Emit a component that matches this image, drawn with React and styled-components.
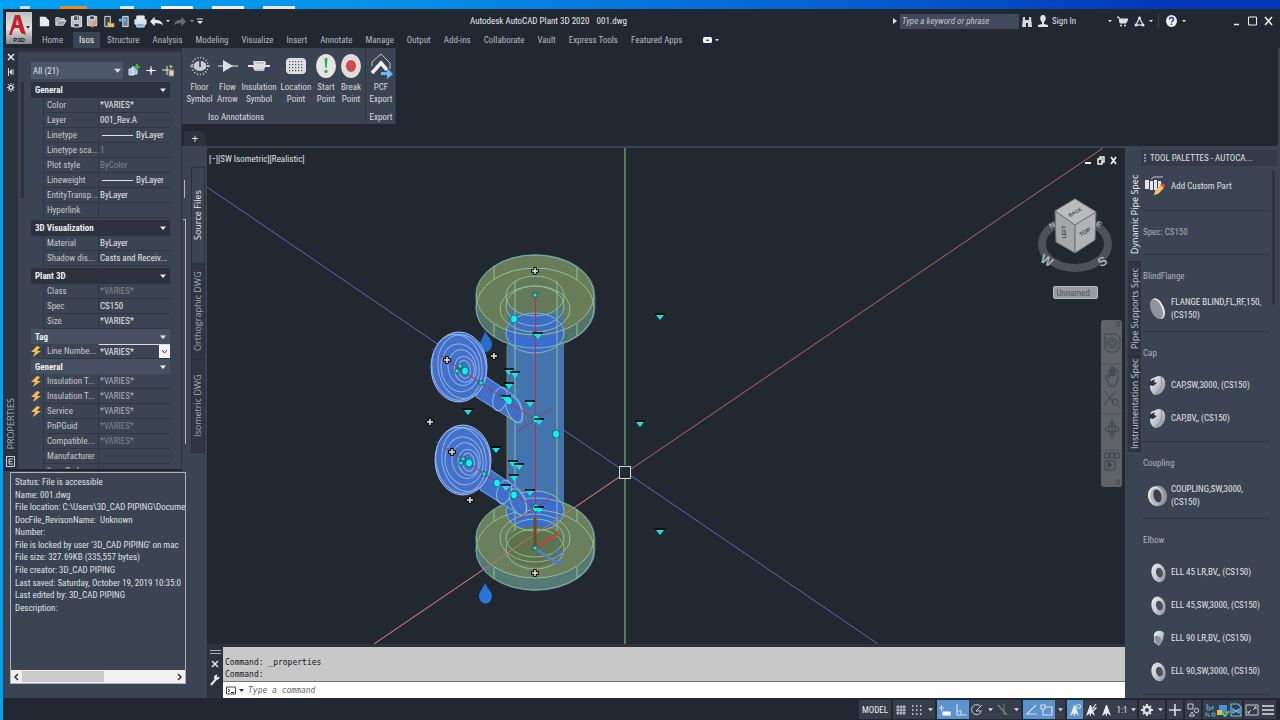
import React, { useState } from 'react';
import styled, { createGlobalStyle } from 'styled-components';

const narrow = '"Roboto Condensed", Roboto, sans-serif';
const wide = '"Open Sans", "Noto Sans", sans-serif';

const GlobalStyle = createGlobalStyle`
    * { box-sizing: border-box; }
    body { margin: 0; overflow: hidden; font-family: ${narrow}; font-size: 9px; color: #dde1e5; }
    button, input, select { font: inherit; color: inherit; margin: 0; padding: 0; border: 0; background: none; border-radius: 0; }
    svg { display: block; flex: none; }
    ul, h1, h2, h3, p { margin: 0; padding: 0; list-style: none; font-weight: normal; font-size: inherit; }
`;

const ribbonTabs = ['Home', 'Isos', 'Structure', 'Analysis', 'Modeling', 'Visualize', 'Insert', 'Annotate', 'Manage', 'Output', 'Add-ins', 'Collaborate', 'Vault', 'Express Tools', 'Featured Apps'];

const isoButtons = [
    { a: 'Floor', b: 'Symbol', icon: 'floor' },
    { a: 'Flow', b: 'Arrow', icon: 'flow' },
    { a: 'Insulation', b: 'Symbol', icon: 'insul' },
    { a: 'Location', b: 'Point', icon: 'location' },
    { a: 'Start', b: 'Point', icon: 'start' },
    { a: 'Break', b: 'Point', icon: 'stop' },
];

const groups = [
    { title: 'General', rows: [
        ['Color', '*VARIES*'], ['Layer', '001_Rev.A'], ['Linetype', 'ByLayer', 'line'], ['Linetype sca...', '1', 'dim'],
        ['Plot style', 'ByColor', 'dim'], ['Lineweight', 'ByLayer', 'line'], ['EntityTransp...', 'ByLayer'], ['Hyperlink', ''],
    ] },
    { title: '3D Visualization', gap: true, rows: [['Material', 'ByLayer'], ['Shadow dis...', 'Casts and Receiv...']] },
    { title: 'Plant 3D', gap: true, rows: [['Class', '*VARIES*', 'dim'], ['Spec', 'CS150'], ['Size', '*VARIES*']] },
    { title: 'Tag', sub: true, rows: [['Line Numbe...', '*VARIES*', 'edit']] },
    { title: 'General', sub: true, rows: [
        ['Insulation T...', '*VARIES*', 'bolt'], ['Insulation T...', '*VARIES*', 'bolt'], ['Service', '*VARIES*', 'bolt'],
        ['PnPGuid', '*VARIES*', 'dim'], ['Compatible...', '*VARIES*', 'dim'], ['Manufacturer', ''], ['Item Code', ''],
    ] },
];

const details = [
    'Status: File is accessible', 'Name: 001.dwg', 'File location: C:\\Users\\3D_CAD PIPING\\Docume',
    'DocFile_RevisonName:  Unknown', 'Number:', "File is locked by user '3D_CAD PIPING' on mac", 'File size: 327.69KB (335,557 bytes)',
    'File creator: 3D_CAD PIPING', 'Last saved: Saturday, October 19, 2019 10:35:0', 'Last edited by: 3D_CAD PIPING', 'Description:',
];

const parts = [
    { title: 'BlindFlange', items: [['FLANGE BLIND,FL,RF,150, (CS150)', 'disc']] },
    { title: 'Cap', items: [['CAP,SW,3000, (CS150)', 'cap'], ['CAP,BV,, (CS150)', 'cap']] },
    { title: 'Coupling', items: [['COUPLING,SW,3000, (CS150)', 'coupling']] },
    { title: 'Elbow', items: [['ELL 45 LR,BV,, (CS150)', 'ell'], ['ELL 45,SW,3000, (CS150)', 'ell'], ['ELL 90 LR,BV,, (CS150)', 'ell90'], ['ELL 90,SW,3000, (CS150)', 'ell']] },
];

const QuickIcon = ({ name }) => (
    <svg width="13" height="13" viewBox="0 0 14 14" fill="none" stroke="#e4e7ea">
        {name == 'new' && <path d="M2 2h6l4 4v6H2z" fill="#e8eaec" stroke="none" />}
        {name == 'open' && <path d="M2 11V3h4l1 1h4v2M2 11l3-5h8l-3 5z" fill="#c9ccd0" fillOpacity=".7" />}
        {name == 'save' && <><path d="M1.500 1.500h11v11h-11z" fill="#b7bbc0" /><path d="M4 1h6v5H4zM4 9h6v4H4z" fill="#3d434c" /><path d="M8 2v3" /></>}
        {name == 'saveas' && <><path d="M1.500 1.500h10v10h-10z" fill="#b7bbc0" /><path d="M4 1h5v4H4z" fill="#3d434c" /><path d="M6 13l6-7" stroke="#e89b4f" strokeWidth="2.500" /></>}
        {name == 'web' && <><path d="M3 1.500h6v11H3z" fill="#3d434c" /><path d="M6 8h2l1 1h4v4H6z" fill="#e8c26a" stroke="#b08838" strokeWidth=".6" /></>}
        {name == 'tomobile' && <><path d="M5 1.500h6v11H5z" fill="#7d838c" /><path d="M1 4h4V2l4 3.500L5 9V7H1z" fill="#59b4ee" stroke="none" /></>}
        {name == 'print' && <><path d="M3 1h8v4H3z" fill="#e8eaec" /><path d="M1 5h12v5H1z" fill="#dfe2e5" /><path d="M3 9h8v4H3z" fill="#69b7e6" /></>}
        {name == 'undo' && <path d="M0 7l5-5v3c4 0 8 1 9 6-3-2-5-2-9-2v3z" fill="#e8eaec" stroke="none" />}
        {name == 'redo' && <path d="M13 7L8 2v3c-4 0-7 1-8 6 3-2 5-2 8-2v3z" fill="#666c76" stroke="none" />}
    </svg>
);

const Caret = ({ size = 5, color = '#d7dade' }) => (
    <svg width={size} height={size} viewBox="0 0 6 6"><path d="M0 1.500h6L3 5z" fill={color} /></svg>
);

const RibbonIcon = ({ name }) => (
    <svg width="26" height="26" viewBox="0 0 26 26">
        {name == 'floor' && <><ellipse cx="13" cy="13" rx="8" ry="8.500" fill="none" stroke="#e3e5e8" strokeWidth="1.500" strokeDasharray="1 2" /><ellipse cx="13" cy="13" rx="6.500" ry="5" fill="#c8cbcf" /><path d="M3 13h3M20 13h3" stroke="#e3e5e8" /><path d="M13 8v6" stroke="#30363f" strokeWidth="1.500" /></>}
        {name == 'flow' && <><path d="M3 13h20" stroke="#e3e5e8" strokeWidth="1" /><path d="M8 7l10 6-10 6z" fill="#dcdfe2" /></>}
        {name == 'insul' && <><path d="M2 13h22" stroke="#e3e5e8" strokeWidth="2" /><path d="M7 8h12l1 2-2 8H9l-2-3 1-2z" fill="#dcdfe2" /><path d="M8 17h10M9 10h9" stroke="#8a8f96" strokeWidth=".7" /></>}
        {name == 'location' && <><rect x="3" y="5" width="20" height="16" rx="4" fill="#dedfe1" /><g fill="#4a4e55">{[9, 12, 15, 18].map(y => [7, 10, 13, 16, 19].map(x => <rect key={x + '-' + y} x={x - 1} y={y - 1} width="1.200" height="1.200" />))}</g></>}
        {name == 'start' && <><ellipse cx="13" cy="13" rx="10" ry="12" fill="#e4e4e3" /><path d="M11.500 5h3l-.8 10h-1.400z" fill="#2fae57" /><circle cx="13" cy="18.500" r="1.700" fill="#2fae57" /></>}
        {name == 'stop' && <><ellipse cx="13" cy="13" rx="10" ry="12" fill="#dedddc" /><ellipse cx="13" cy="13" rx="5" ry="6" fill="#cf4a4a" /></>}
        {name == 'pcf' && <><path d="M4 13v-4l9-8 9 9v6" fill="none" stroke="#c5c9cf" /><path d="M4 20l9-10 6 7" fill="none" stroke="#f1f2f4" strokeWidth="3.500" /><path d="M13 19h6v-4l6 6-6 5v-4h-6z" fill="#6bb7f2" /></>}
    </svg>
);

const PartIcon = ({ name }) => (
    <svg width="22" height="24" viewBox="0 0 22 24">
        <defs><linearGradient id="metal" x1="0" y1="0" x2="1" y2="1"><stop offset="0" stopColor="#f2f3f5" /><stop offset=".5" stopColor="#c3c7cd" /><stop offset="1" stopColor="#80868f" /></linearGradient></defs>
        {name == 'disc' && <g transform="rotate(-24 11 12)"><ellipse cx="12" cy="12" rx="6" ry="11" fill="#e6e8eb" /><ellipse cx="10.500" cy="12" rx="5.500" ry="10.500" fill="#8f959d" /></g>}
        {name == 'cap' && <><path d="M5 5l7-3c6 0 8 5 7 10s-5 9-10 9c-4-2-5-6-5-9z" fill="url(#metal)" /><path d="M9 20c5-2 8-9 6-17" stroke="#8b9199" fill="none" /><path d="M3 8l6-3-1 3 3 1-4 3-4-1z" fill="#2d333d" /></>}
        {name == 'coupling' && <g transform="rotate(-14 11 12)"><ellipse cx="13" cy="12" rx="8" ry="10" fill="#8d939b" /><ellipse cx="10" cy="12" rx="8" ry="10" fill="url(#metal)" /><ellipse cx="10" cy="12" rx="5.500" ry="7.500" fill="#aeb4bc" /><ellipse cx="11.500" cy="12" rx="4" ry="6.500" fill="#38404c" /></g>}
        {name == 'ell' && <g transform="rotate(-14 12 12)"><ellipse cx="12.500" cy="12" rx="7" ry="9.500" fill="url(#metal)" /><ellipse cx="13" cy="11" rx="4.500" ry="6" fill="#d7dade" /><ellipse cx="13.500" cy="12" rx="3.500" ry="5" fill="#4a525e" /></g>}
        {name == 'ell90' && <><path d="M8 7c2-4 7-4 10-1l-1 7-4 6-5-4z" fill="url(#metal)" /><ellipse cx="12" cy="13" rx="3" ry="5" transform="rotate(-30 12 13)" fill="#8a9099" /></>}
    </svg>
);

const StatusIcon = ({ name }) => (
    <svg width="14" height="14" viewBox="0 0 14 14" fill="none" stroke="#dadde1" strokeWidth="1.200">
        {name == 'grid' && <path d="M2 4h10M2 7h10M2 10h10M4 2v10M7 2v10M10 2v10" strokeWidth=".9" />}
        {name == 'snap' && <path d="M2 3h10M2 7h10M2 11h10" strokeDasharray="1.500 2.500" strokeWidth="1.500" />}
        {name == 'dyn' && <><path d="M1 5h5M3.500 2v6" /><path d="M5 9h7v3H5z" fill="#fff" stroke="#fff" /></>}
        {name == 'ortho' && <path d="M3 1v11h10M3 8h4v4" />}
        {name == 'polar' && <path d="M10 3a5 5 0 1 0 1 6M6 8l6-6M6 8h6" strokeWidth=".9" />}
        {name == 'iso' && <><path d="M2 2l9 10" stroke="#57a36a" /><path d="M8 1v11" stroke="#b2575f" /></>}
        {name == 'angle' && <path d="M12 2L3 11h10" />}
        {name == 'osnap' && <><path d="M3 4h9v8H3z" /><path d="M1 2h4v4H1z" fill="#5b93cf" /></>}
        {(name == 'anno' || name == 'auto' || name == 'scale') && <path d="M6 2h1l4 11-3-2.500H7V13H6v-2.500L2 13z" fill="#e8eaed" stroke="none" />}
        {name == 'anno' && <circle cx="10.500" cy="3.500" r="2" />}
        {name == 'auto' && <path d="M12 1L9 5h3L9 8" />}
        {name == 'gear' && <><circle cx="7" cy="7" r="3.200" strokeWidth="2.500" /><path d="M7 1v2M7 11v2M1 7h2M11 7h2M3 3l1 1M10 10l1 1M3 11l1-1M10 4l1-1" strokeWidth="2" /></>}
        {name == 'plus' && <path d="M7 1v12M1 7h12" strokeWidth="1.600" />}
        {name == 'shapes' && <><path d="M2 1h5v5H2zM6 9l2.500 4h-5z" strokeWidth=".9" /><circle cx="10.500" cy="7.500" r="2.200" strokeWidth=".9" /></>}
        {name == 'isohot' && <g stroke="#5eb2ee"><path d="M4 1v6h3V4M4 4h3M7 7l3-4v4M3 9v4M5 10v3h2M9 10h3v3H9z" strokeWidth=".9" /></g>}
        {name == 'plan' && <><path d="M3 2h8v8H3z" fill="#4493d8" stroke="none" /><path d="M1 7h5v5H1z" fill="#e2bb4a" stroke="none" /><path d="M6 10l3 3 4-5" stroke="#6dc25a" strokeWidth="2" /></>}
        {name == 'doc' && <g stroke="#6cb9ee"><path d="M2 1h7l3 3v9H2z" /><path d="M4 6v4l3-2 3 2V6L7 8z" /></g>}
        {name == 'full' && <><path d="M1 2h12v10H1z" strokeWidth=".9" /><path d="M3 10l3-3M3 8v2h2M11 4L8 7M9 4h2v2" strokeWidth=".9" /></>}
        {name == 'menu' && <path d="M1 3h12M1 7h12M1 11h12" strokeWidth="1.700" />}
    </svg>
);

const Bolt = () => <svg width="10" height="11" viewBox="0 0 10 11"><path d="M6 0L0 6h4L2 11l8-6H6l3-4z" fill="#f6bd55" /></svg>;

const triangles = [[660, 316], [640, 423], [660, 531], [468, 411], [538, 335], [509, 371], [515, 374], [509, 385], [530, 403], [506, 398], [539, 421], [496, 449], [513, 463], [519, 466], [514, 477], [506, 487], [530, 492], [539, 509]];
const dots = [[514, 319], [556, 434], [465, 371], [509, 401], [497, 483], [514, 495], [469, 463], [536, 419], [536, 508]];
const squares = [[535, 295], [535, 334], [481, 383], [484, 474], [535, 548], [460, 366], [457, 371], [502, 397], [463, 459], [461, 463]];
const crosses = [[535, 271], [494, 356], [447, 360], [430, 422], [452, 452], [470, 500], [535, 573]];

const Branch = ({ x, y }) => (
    <g>
        <path d={`M${x + 16} ${y + 2}L${x + 57} ${y + 30}q9 10 6 25l-4 1-42-26z`} fill="#3f6fc9" stroke="#79a9ee" />
        <ellipse cx={x + 55} cy={y + 42} rx="7" ry="14" transform={`rotate(-22 ${x + 55} ${y + 42})`} fill="none" stroke="#8cc3a8" />
        <ellipse cx={x + 41} cy={y + 32} rx="7" ry="12" transform={`rotate(14 ${x + 41} ${y + 32})`} fill="none" stroke="#8ab4f2" />
        <ellipse cx={x} cy={y} rx="28" ry="35" fill="#4471c8" stroke="#9fc0f8" />
        <g fill="none" stroke="#8fb0ea" transform={`rotate(-8 ${x} ${y})`}>
            <ellipse cx={x - 2} cy={y} rx="25" ry="33" />
            <ellipse cx={x + 3} cy={y} rx="24" ry="32" />
            <ellipse cx={x + 1} cy={y + 1} rx="19" ry="24" />
            <ellipse cx={x + 3} cy={y + 1} rx="14" ry="18" />
            <ellipse cx={x + 5} cy={y + 3} rx="10" ry="13" />
            <ellipse cx={x + 5} cy={y + 3} rx="6" ry="9" />
        </g>
    </g>
);

const Model = () => (
    <Scene viewBox="207 148 918 496" preserveAspectRatio="xMidYMid slice" role="img" aria-label="Pipe model">
        <path d="M374 644L1103 148" stroke="#b8656f" />
        <path d="M207 187L878 644" stroke="#6a65b5" />
        <path d="M480 343c1-4 4-7 5-12 2 5 7 8 7 13s-3 8-7 8" fill="#2a6dc9" />
        <path d="M476 295v13a59 40 0 0 0 119 0v-13z" fill="#537569" />
        <ellipse cx="535" cy="295" rx="59" ry="40" fill="#697e58" />
        <path d="M476 538v12a59 40 0 0 0 119 0v-12z" fill="#557a74" />
        <ellipse cx="535" cy="538" rx="59" ry="40" fill="#6a7f5c" />
        <path d="M507 322h57v190a29 20 0 0 1-57 0z" fill="#4374ae" />
        <ellipse cx="535" cy="333" rx="29" ry="20" fill="#3a6dd2" />
        <ellipse cx="535" cy="511" rx="29" ry="19" fill="#3a6dd2" />
        <path d="M507 300v22a29 20 0 0 0 57 0v-22z" fill="#4677a0" opacity=".7" />
        <ellipse cx="535" cy="296" rx="29" ry="20" fill="#64785a" />
        <ellipse cx="535" cy="323" rx="27" ry="11" fill="#3a6dd2" opacity=".8" />
        <ellipse cx="535" cy="546" rx="30" ry="20" fill="#5e724c" />
        <g fill="none" stroke="#94bd96">
            <ellipse cx="535" cy="295" rx="59" ry="40" />
            <ellipse cx="535" cy="308" rx="59" ry="40" />
            <ellipse cx="535" cy="296" rx="29" ry="20" />
            <ellipse cx="535" cy="309" rx="35" ry="23" />
            <ellipse cx="535" cy="306" rx="29" ry="20" />
            <ellipse cx="535" cy="333" rx="29" ry="20" />
            <path d="M494 267v13M577 267v13M494 324v12M577 324v12M515 281v250M557 281v250" />
            <ellipse cx="535" cy="538" rx="59" ry="40" />
            <ellipse cx="535" cy="550" rx="59" ry="40" />
            <ellipse cx="535" cy="511" rx="29" ry="20" />
            <ellipse cx="535" cy="538" rx="35" ry="24" />
            <ellipse cx="535" cy="538" rx="29" ry="19" />
            <ellipse cx="535" cy="549" rx="29" ry="20" />
            <path d="M494 510v12M577 510v12M494 567v12M577 567v12" />
        </g>
        <path d="M476 295a59 40 0 0 1 119 0v13a59 40 0 0 1-119 0zM476 538a59 40 0 0 1 119 0v12a59 40 0 0 1-119 0z" fill="none" stroke="#5a9bc8" opacity=".6" />
        <path d="M507 346v164" stroke="#76884e" />
        <Branch x={459} y={367} />
        <Branch x={463} y={460} />
        <path d="M432 349l12 8M436 442l12 8" stroke="#5a62c8" />
        <g stroke="#c02c4a" fill="none">
            <path d="M535.500 295v253M441 356l94 64M446 448l89 60M517 432l35-24M517 520l35-23" />
        </g>
        <path d="M374 644L625 473" stroke="#c0707a" />
        <path d="M485 583c2 5 7 9 7 13a6 7 0 0 1-13 0c0-4 4-8 6-13z" fill="#2a75d8" />
        <path d="M535 548v-30" stroke="#6f4b22" strokeWidth="3" />
        <path d="M535 548l23-15" stroke="#b24a4a" strokeWidth="3" />
        <path d="M535 548l23 16" stroke="#5580c8" strokeWidth="3" />
        <path d="M552 552h12l-6 6 6 4h-8M557 542v20" stroke="#3f78d8" fill="none" />
        <path d="M625 148v317M625 479v165" stroke="#4f8158" strokeWidth="2" />
        <rect x="619.500" y="466.500" width="11" height="12" fill="#242a31" stroke="#d4d7da" />
        {dots.map(([x, y]) => <ellipse key={x + '-' + y} cx={x} cy={y} rx="3.500" ry="4" fill="#12f0f4" stroke="#083a44" strokeWidth=".6" />)}
        {squares.map(([x, y]) => <rect key={x + '-' + y} x={x - 2} y={y - 2} width="4" height="4" fill="#1fe0dc" stroke="#053a3a" strokeWidth=".6" />)}
        {triangles.map(([x, y]) => <g key={x + '-' + y}><path d={`M${x - 4} ${y - 1}h8l-4 5z`} fill="#12e6e6" /><path d={`M${x - 5} ${y - 2}h10`} stroke="#000" strokeWidth="1.500" /></g>)}
        {crosses.map(([x, y]) => <g key={x + '-' + y}><path d={`M${x - 4} ${y}h8M${x} ${y - 4}v8`} stroke="#111" strokeWidth="3.500" /><path d={`M${x - 3} ${y}h6M${x} ${y - 3}v6`} stroke="#e8e8e8" strokeWidth="1.500" /></g>)}
    </Scene>
);

const ViewCube = () => (
    <svg width="80" height="84" viewBox="1035 194 80 84">
        <ellipse cx="1075" cy="244" rx="33" ry="24" fill="none" stroke="#4d5159" strokeWidth="8" />
        <g fill="#a9adb2" fontFamily="Liberation Sans" fontWeight="bold" textAnchor="middle">
            <text x="1052" y="228" fontSize="8" transform="rotate(-30 1052 225)">N</text>
            <text x="1099" y="227" fontSize="8" transform="rotate(30 1099 224)">E</text>
            <text x="1047" y="265" fontSize="13" transform="rotate(30 1047 260)">W</text>
            <text x="1102" y="266" fontSize="13" transform="rotate(-30 1102 261)">S</text>
        </g>
        <path d="M1075 199l21 13-21 13-20-14z" fill="#b9bbbc" stroke="#8b8e92" />
        <path d="M1055 211l20 14v28l-19-11z" fill="#a5a8aa" stroke="#6e7277" />
        <path d="M1096 212l-21 13v28l20-13z" fill="#b1b3b5" stroke="#6e7277" />
        <g fill="#45494f" fontFamily="Liberation Sans" fontWeight="bold" fontSize="5" textAnchor="middle">
            <text x="1075" y="214" transform="rotate(-30 1075 212)">BACK</text>
            <text x="1064" y="234" transform="rotate(-90 1064 232)">LEFT</text>
            <text x="1085" y="234" fontSize="6" transform="rotate(-30 1085 232)">TOP</text>
        </g>
    </svg>
);

export default function App() {
    const [tab, setTab] = useState('Isos');
    const [keyword, setKeyword] = useState('');
    const [command, setCommand] = useState('');

    return (
        <Desktop>
            <GlobalStyle />
            <DesktopEdge>
                <Shortcut $left={20} $width={10} $color="#bfe2fa" />
                <Shortcut $left={60} $width={27} $color="#e98a2b" />
                <Shortcut $left={120} $width={14} $color="#d3ecfb" />
                <Shortcut $left={161} $width={32} $color="#f2f2f2" />
                <Shortcut $left={212} $width={32} $color="#f2ece8" />
                <Shortcut $left={263} $width={32} $color="#e8e6e8" />
            </DesktopEdge>
            <Window>
                <Header>
                    <AppButton aria-label="Application menu">
                        <svg width="26" height="31" viewBox="0 0 26 31">
                            <path d="M3 22L9 2h5l6 20-5-2-2-5H9c-2 2-3 4-3 7z" fill="#c6202b" />
                            <path d="M10 12l1-6 2 6z" fill="#d9d6d6" />
                            <path d="M20 13h4l-2 3z" fill="#333" />
                            <text x="13" y="29" fontSize="6" fontWeight="bold" fontFamily="Liberation Sans" fill="#15171a" textAnchor="middle">P3D</text>
                        </svg>
                    </AppButton>
                    <HeaderRows>
                        <TitleBar>
                            <QuickAccess>
                                {['new', 'open', 'save', 'saveas', 'web', 'tomobile', 'print', 'undo'].map(n => <QuickButton key={n} aria-label={n}><QuickIcon name={n} /></QuickButton>)}
                                <CaretButton aria-label="Undo list"><Caret size={4} /></CaretButton>
                                <QuickButton aria-label="redo"><QuickIcon name="redo" /></QuickButton>
                                <CaretButton aria-label="Redo list"><Caret size={4} color="#8a9099" /></CaretButton>
                                <CaretButton aria-label="Customize"><svg width="6" height="7" viewBox="0 0 6 7"><path d="M0 1h6" stroke="#e4e7ea" /><path d="M0 3h6L3 6z" fill="#e4e7ea" /></svg></CaretButton>
                            </QuickAccess>
                            <AppTitle>Autodesk AutoCAD Plant 3D 2020 <FileName>001.dwg</FileName></AppTitle>
                            <InfoCenter>
                                <svg width="4" height="6" viewBox="0 0 4 6"><path d="M0 0l4 3-4 3z" fill="#dfe2e5" /></svg>
                                <Search aria-label="Search" placeholder="Type a keyword or phrase" value={keyword} onChange={(e) => setKeyword(e.target.value)} />
                                <InfoButton $width={16} aria-label="Find"><svg width="10" height="11" viewBox="0 0 10 11"><path d="M1 1h2v3h4V1h2l1 10H6V7H4v4H0z" fill="#d5d8dc" /></svg></InfoButton>
                                <InfoButton $width={62} $left><svg width="10" height="12" viewBox="0 0 10 12"><path d="M5 0c4 0 3 6 1 7v2l4 1v2H0v-2l4-1V7C2 6 1 0 5 0z" fill="#dfe2e5" /></svg>Sign In</InfoButton>
                                <CaretButton aria-label="Account"><Caret size={4} /></CaretButton>
                                <InfoButton $width={17} aria-label="Store"><svg width="11" height="11" viewBox="0 0 11 11"><path d="M0 1h2l1 6h6l2-4H3" fill="#dfe2e5" stroke="#dfe2e5" /><circle cx="4" cy="9.500" r="1" fill="#dfe2e5" /><circle cx="8" cy="9.500" r="1" fill="#dfe2e5" /></svg></InfoButton>
                                <InfoButton $width={16} aria-label="Autodesk"><svg width="11" height="11" viewBox="0 0 11 11"><path d="M5.500 2L9 9H2z" fill="none" stroke="#bfc9e6" strokeWidth="1.500" /><circle cx="5.500" cy="2" r="1.500" fill="#dfe2e5" /><circle cx="2" cy="9" r="1.500" fill="#dfe2e5" /><circle cx="9" cy="9" r="1.500" fill="#dfe2e5" /></svg></InfoButton>
                                <CaretButton aria-label="Apps"><Caret size={4} /></CaretButton>
                                <Divider />
                                <InfoButton $width={18} aria-label="Help"><svg width="11" height="12" viewBox="0 0 11 12"><ellipse cx="5.500" cy="6" rx="5.500" ry="6" fill="#eceef2" /><path d="M3.500 4.500c0-3 4-2.500 4 0 0 1.500-2 1.500-2 3M5.500 8.500v1.500" stroke="#26438c" strokeWidth="1.500" fill="none" /></svg></InfoButton>
                                <CaretButton aria-label="Help list"><Caret size={4} /></CaretButton>
                            </InfoCenter>
                            <WindowButtons>
                                <button aria-label="Minimize"><svg width="9" height="10" viewBox="0 0 9 10"><path d="M2 8.500h5" stroke="#eee" strokeWidth="1.500" /></svg></button>
                                <button aria-label="Maximize"><svg width="9" height="10" viewBox="0 0 9 10"><path d="M.5 1h8v8h-8z" stroke="#eee" fill="none" /></svg></button>
                                <button aria-label="Close"><svg width="9" height="10" viewBox="0 0 9 10"><path d="M1 1l7 8M8 1L1 9" stroke="#eee" strokeWidth="1.500" /></svg></button>
                            </WindowButtons>
                        </TitleBar>
                        <RibbonTabs>
                            {ribbonTabs.map(t => <RibbonTab key={t} $active={t == tab} onClick={() => setTab(t)}>{t}</RibbonTab>)}
                            <RibbonMode aria-label="Ribbon mode"><svg width="9" height="6" viewBox="0 0 9 6"><rect width="9" height="6" rx="1.500" fill="#f0f2f4" /><path d="M3 4h3L4.500 2z" fill="#222832" /></svg><Caret size={4} /></RibbonMode>
                        </RibbonTabs>
                    </HeaderRows>
                </Header>

                <Body>
                    <Ribbon>
                        <Panel>
                            <PanelButtons>
                                {isoButtons.map(b => <RibbonButton key={b.icon}><RibbonIcon name={b.icon} /><span>{b.a}<br />{b.b}</span></RibbonButton>)}
                            </PanelButtons>
                            <PanelTitle $shift>Iso Annotations</PanelTitle>
                        </Panel>
                        <Panel>
                            <RibbonButton><RibbonIcon name="pcf" /><span>PCF<br />Export</span></RibbonButton>
                            <PanelTitle>Export</PanelTitle>
                        </Panel>
                    </Ribbon>
                    <FileTabs><NewTab aria-label="New drawing">+</NewTab></FileTabs>

                    <Properties>
                        <PaletteBar>
                            <svg width="8" height="8" viewBox="0 0 8 8"><path d="M1 1l6 6M7 1L1 7" stroke="#e6e8ea" strokeWidth="1.500" /></svg>
                            <svg width="8" height="8" viewBox="0 0 8 8"><path d="M1.500 0v8M6 1v6" stroke="#d5d8db" /><path d="M2 4l3-3v6z" fill="#d5d8db" /></svg>
                            <svg width="8" height="9" viewBox="0 0 8 9"><circle cx="4" cy="4.500" r="2" fill="none" stroke="#d5d8db" strokeWidth="1.500" /><path d="M4 0v9M0 4.500h8M1 1l6 7M7 1L1 8" stroke="#d5d8db" strokeDasharray="1.500 6" /></svg>
                            <BarName>PROPERTIES</BarName>
                            <svg width="9" height="11" viewBox="0 0 9 11"><path d="M.5 .5h8v10h-8zM3 3v5M3 3h4M3 5.500h3M3 8h4" stroke="#cdd1d6" fill="none" /></svg>
                        </PaletteBar>
                        <PropBody>
                            <PropTop>
                                <SelectWrap><select aria-label="Selected objects" defaultValue="all"><option value="all">All (21)</option></select><Caret size={7} /></SelectWrap>
                                <PickButton aria-label="Toggle PICKADD"><svg width="12" height="13" viewBox="0 0 12 13"><path d="M1 5h5v6H1zM4 3h5v7H4z" fill="#8fb4e8" stroke="#e6edf7" /><path d="M9 0v6M6 3h6" stroke="#39b54a" strokeWidth="2" /></svg></PickButton>
                                <PickButton aria-label="Select objects"><svg width="10" height="11" viewBox="0 0 10 11"><path d="M5 1v9M0 5.500h10" stroke="#e8eaed" /><path d="M3 5.500l2-2.500 2 2.500-2 2.500z" fill="#e8eaed" /></svg></PickButton>
                                <PickButton aria-label="Quick select"><svg width="12" height="13" viewBox="0 0 12 13"><path d="M5 2v9M0 6h9" stroke="#e8eaed" /><path d="M7 6h5v6H7z" fill="#d8cfc0" stroke="#8c7d66" /><path d="M9 0L7 3h2L8 6l3-4H9z" fill="#f6bd55" /></svg></PickButton>
                            </PropTop>
                            <PropScroll>
                                <Track />
                                <PropTable>
                                    <colgroup><LeadCol /><LabelCol /><col /></colgroup>
                                    {groups.map((g, i) => (
                                        <tbody key={i}>
                                            {g.gap && <GapRow><td colSpan="3" /></GapRow>}
                                            <GroupRow $sub={g.sub}><th colSpan="3" scope="colgroup"><div>{g.title}<Caret size={6} color="#f0f2f4" /></div></th></GroupRow>
                                            {g.rows.map(([label, value, kind], j) => (
                                                <PropRow key={j} $dim={kind == 'dim'} $soft={kind == 'bolt'} $edit={kind == 'edit'}>
                                                    <td>{(kind == 'bolt' || kind == 'edit') && <Bolt />}</td>
                                                    <th scope="row">{label}</th>
                                                    <td><div>{kind == 'line' && <Sample />}{value}{kind == 'edit' && <EditButton aria-label="Line number list"><svg width="7" height="5" viewBox="0 0 7 5"><path d="M1 1l2.500 3L6 1" stroke="#333" fill="none" /></svg></EditButton>}</div></td>
                                                </PropRow>
                                            ))}
                                        </tbody>
                                    ))}
                                </PropTable>
                            </PropScroll>
                        </PropBody>
                    </Properties>

                    <ProjectTabs>
                        <ProjectTab $size={97} $active>Source Files</ProjectTab>
                        <ProjectTab $size={95}>Orthographic DWG</ProjectTab>
                        <ProjectTab $size={94}>Isometric DWG</ProjectTab>
                    </ProjectTabs>

                    <Details>
                        <DetailsBox>
                            <DetailsList>{details.map(d => <li key={d}>{d}</li>)}</DetailsList>
                            <ScrollRow>
                                <svg width="6" height="8" viewBox="0 0 6 8"><path d="M5 1L2 4l3 3" stroke="#333" strokeWidth="1.500" fill="none" /></svg>
                                <ScrollTrack><ScrollThumb /></ScrollTrack>
                                <svg width="6" height="8" viewBox="0 0 6 8"><path d="M1 1l3 3-3 3" stroke="#333" strokeWidth="1.500" fill="none" /></svg>
                            </ScrollRow>
                        </DetailsBox>
                    </Details>

                    <Center>
                        <Viewport>
                            <Model />
                            <ViewControls><button>[−]</button><button>[SW Isometric]</button><button>[Realistic]</button></ViewControls>
                            <ViewButtons>
                                <button aria-label="Minimize drawing"><svg width="8" height="9" viewBox="0 0 8 9"><path d="M1 7h6" stroke="#eee" strokeWidth="2" /></svg></button>
                                <button aria-label="Restore drawing"><svg width="8" height="9" viewBox="0 0 8 9"><path d="M1 3h4v5H1zM3 3V1h4v5H5" stroke="#eee" fill="none" strokeWidth="1.500" /></svg></button>
                                <button aria-label="Close drawing"><svg width="8" height="9" viewBox="0 0 8 9"><path d="M1 1l5 7M6 1L1 8" stroke="#eee" strokeWidth="1.700" /></svg></button>
                            </ViewButtons>
                            <CubeBox><ViewCube /><Ucs>Unnamed</Ucs></CubeBox>
                            <NavBar>
                                <svg width="21" height="167" viewBox="0 0 21 167" fill="none" stroke="#3f444a">
                                    <circle cx="17" cy="4" r="2" />
                                    <path d="M4 14h11l4 4v9l-4 5H7l-3-4z" /><circle cx="11" cy="23" r="5" /><circle cx="11" cy="23" r="2.500" />
                                    <path d="M0 44h21M0 94h21M0 130h21" stroke="#50555b" />
                                    <path d="M6 60l-2-3 2-2 2 3v-8h2v6-9h2v9-8h2v8-6h3v10l-3 6H9z" />
                                    <path d="M3 71l10 12M15 71L3 85" /><circle cx="14" cy="82" r="3" /><path d="M16 84l3 3" />
                                    <ellipse cx="11" cy="109" rx="7" ry="3" /><ellipse cx="11" cy="109" rx="3" ry="7" /><path d="M11 99v20" />
                                    <path d="M4 133h4v5H4zM9 133h4v5H9zM14 133h4v5h-4zM4 141h10v9H4z" /><path d="M7 142l4 3-4 3z" fill="#3f444a" />
                                    <circle cx="17" cy="162" r="2" />
                                </svg>
                            </NavBar>
                        </Viewport>
                        <CommandLine>
                            <CommandBar>
                                <Grip />
                                <svg width="8" height="8" viewBox="0 0 8 8"><path d="M1 1l6 6M7 1L1 7" stroke="#e6e8ea" strokeWidth="1.500" /></svg>
                                <svg width="10" height="12" viewBox="0 0 10 12"><path d="M1 11l5-6" stroke="#e6e8ea" strokeWidth="2" /><path d="M9 3L7 4 6 3l1-2c-3 0-3 3-2 4s4 1 4-2z" fill="#e6e8ea" stroke="#e6e8ea" /></svg>
                            </CommandBar>
                            <CommandMain>
                                <History><p>Command: _properties</p><p>Command:</p></History>
                                <CommandEntry>
                                    <svg width="18" height="9" viewBox="0 0 18 9"><path d="M.5 1h9v7h-9z" fill="#fff" stroke="#444" /><path d="M2 3l2 1.500L2 6M5 6.500h3" stroke="#222" fill="none" /><path d="M13 3h5l-2.500 3z" fill="#333" /></svg>
                                    <CommandInput aria-label="Command" placeholder="Type a command" value={command} onChange={(e) => setCommand(e.target.value)} />
                                </CommandEntry>
                            </CommandMain>
                        </CommandLine>
                    </Center>

                    <ToolPalettes>
                        <PaletteTitle><Dots /><h2>TOOL PALETTES - AUTOCA...</h2></PaletteTitle>
                        <PaletteMain>
                            <PaletteTabs>
                                <PaletteTab $active>Dynamic Pipe Spec</PaletteTab>
                                <PaletteTab>Pipe Supports Spec</PaletteTab>
                                <PaletteTab>Instrumentation Spec</PaletteTab>
                            </PaletteTabs>
                            <PaletteList>
                                <CustomPart>
                                    <svg width="22" height="20" viewBox="0 0 22 20"><path d="M2 4h4v9H2zM7 5h3v9H7zM11 4h3v10h-3zM15 5h3v6h-3z" fill="#e2e4e7" /><path d="M8 3l3-2h9" stroke="#c9ccd1" fill="none" /><path d="M11 19l1-4 5-6 4 3-6 6z" fill="#efc46a" /><path d="M17 9l2-2 3 2-1 3z" fill="#e0524d" /></svg>
                                    Add Custom Part
                                </CustomPart>
                                <SpecName>Spec: CS150</SpecName>
                                {parts.map(p => (
                                    <Section key={p.title}>
                                        <h3>{p.title}</h3>
                                        {p.items.map(([name, icon]) => <Part key={name}><PartIcon name={icon} /><span>{name}</span></Part>)}
                                    </Section>
                                ))}
                            </PaletteList>
                            <PaletteScroll />
                        </PaletteMain>
                    </ToolPalettes>
                </Body>

                <StatusBar>
                    <StatusGroup><ModelButton>MODEL</ModelButton></StatusGroup>
                    <StatusGroup><StatusButton aria-label="Grid"><StatusIcon name="grid" /></StatusButton><StatusButton aria-label="Snap"><StatusIcon name="snap" /></StatusButton><StatusCaret aria-label="Snap list"><Caret /></StatusCaret></StatusGroup>
                    <StatusGroup><StatusButton $on aria-label="Dynamic input"><StatusIcon name="dyn" /></StatusButton><StatusButton $on aria-label="Ortho"><StatusIcon name="ortho" /></StatusButton><StatusButton aria-label="Polar"><StatusIcon name="polar" /></StatusButton><StatusCaret aria-label="Polar list"><Caret /></StatusCaret><StatusButton aria-label="Isodraft"><StatusIcon name="iso" /></StatusButton><StatusCaret aria-label="Isodraft list"><Caret /></StatusCaret></StatusGroup>
                    <StatusGroup><StatusButton $on aria-label="Object snap tracking"><StatusIcon name="angle" /></StatusButton><StatusButton $on aria-label="Object snap"><StatusIcon name="osnap" /></StatusButton><StatusCaret aria-label="Object snap list"><Caret /></StatusCaret></StatusGroup>
                    <StatusGroup><StatusButton $on aria-label="Annotation visibility"><StatusIcon name="anno" /></StatusButton><StatusButton aria-label="Auto scale"><StatusIcon name="auto" /></StatusButton><StatusButton aria-label="Annotation scale"><StatusIcon name="scale" /></StatusButton><ScaleButton>1:1<Caret /></ScaleButton></StatusGroup>
                    <StatusGroup><StatusButton aria-label="Workspace"><StatusIcon name="gear" /></StatusButton><StatusCaret aria-label="Workspace list"><Caret /></StatusCaret></StatusGroup>
                    <StatusGroup><StatusButton aria-label="Annotation monitor"><StatusIcon name="plus" /></StatusButton></StatusGroup>
                    <StatusGroup><StatusButton aria-label="Isolate objects"><StatusIcon name="shapes" /></StatusButton></StatusGroup>
                    <StatusGroup><StatusButton $slim aria-label="Iso"><StatusIcon name="isohot" /></StatusButton><StatusButton $slim aria-label="Project"><StatusIcon name="plan" /></StatusButton><StatusButton $slim aria-label="Document"><StatusIcon name="doc" /></StatusButton></StatusGroup>
                    <StatusGroup><StatusButton aria-label="Clean screen"><StatusIcon name="full" /></StatusButton><StatusButton aria-label="Customization"><StatusIcon name="menu" /></StatusButton></StatusGroup>
                </StatusBar>
            </Window>
        </Desktop>
    );
}

const Desktop = styled.div`
    display: flex;
    flex-direction: column;
    height: 100vh;
    padding-left: 3px;
    background: linear-gradient(to right, #00a2f4 0, #0690ea 30%, #0560d2 65%, #0339b8 90%);
`;
const DesktopEdge = styled.div`
    position: relative;
    flex: none;
    height: 9px;
`;
const Shortcut = styled.i`
    position: absolute;
    bottom: 0;
    left: ${p => p.$left - 3}px;
    width: ${p => p.$width}px;
    height: 3px;
    background: ${p => p.$color};
`;
const Window = styled.div`
    display: flex;
    flex-direction: column;
    flex: 1;
    min-height: 0;
    background: #222832;
`;
const Header = styled.header`
    display: flex;
    flex: none;
    padding: 3px 0 0 3px;
`;
const AppButton = styled.button`
    width: 26px;
    height: 32px;
    background: linear-gradient(#bdbfc2, #e4e4e5 50%, #85888d);
`;
const HeaderRows = styled.div`
    flex: 1;
    min-width: 0;
`;
const TitleBar = styled.div`
    display: flex;
    align-items: center;
    height: 18px;
    padding-left: 4px;
`;
const QuickAccess = styled.div`
    display: flex;
    align-items: center;
`;
const QuickButton = styled.button`
    display: flex;
    justify-content: center;
    width: 16px;
`;
const CaretButton = styled.button`
    display: flex;
    justify-content: center;
    width: 8px;
`;
const AppTitle = styled.h1`
    flex: 1;
    text-align: center;
    color: #e6e8ea;
    white-space: nowrap;
`;
const FileName = styled.span`
    margin-left: 5px;
`;
const InfoCenter = styled.div`
    display: flex;
    align-items: center;
`;
const Search = styled.input`
    width: 119px;
    height: 15px;
    margin-left: 3px;
    padding: 0 2px;
    background: #414a5a;
    font-style: italic;
    outline: none;
    &::placeholder { color: #c0c5cc; opacity: 1; }
`;
const InfoButton = styled.button`
    display: flex;
    align-items: center;
    justify-content: ${p => p.$left ? 'flex-start' : 'center'};
    gap: 4px;
    width: ${p => p.$width}px;
    padding-left: ${p => p.$left ? 3 : 0}px;
    margin-right: ${p => p.$left ? 9 : 0}px;
`;
const Divider = styled.i`
    width: 1px;
    height: 14px;
    margin: 0 3px;
    background: #3c4452;
`;
const WindowButtons = styled.div`
    display: flex;
    gap: 7px;
    padding: 0 7px 0 44px;
`;
const RibbonTabs = styled.nav`
    display: flex;
    align-items: flex-end;
    gap: 1px;
    height: 18px;
    padding-left: 4px;
`;
const RibbonTab = styled.button`
    height: 16px;
    padding: 0 6px;
    margin-left: ${p => p.$active ? 3 : 0}px;
    white-space: nowrap;
    color: ${p => p.$active ? '#f0f2f4' : '#b4b9c0'};
    background: ${p => p.$active ? '#3b4453' : 'transparent'};
`;
const RibbonMode = styled.button`
    display: flex;
    align-items: center;
    gap: 3px;
    height: 16px;
    margin-left: 14px;
`;
const Body = styled.main`
    display: grid;
    flex: 1;
    min-height: 0;
    grid-template-columns: 179px 25px minmax(0, 1fr) 155px;
    grid-template-rows: 76px 24px minmax(0, 323fr) minmax(0, 227fr);
`;
const Ribbon = styled.section`
    grid-area: 1 / 2 / 2 / 5;
    display: flex;
    border-right: 2px solid #3b4453;
`;
const Panel = styled.div`
    display: flex;
    flex-direction: column;
    padding: 0 1px 0 2px;
    background: #3b4453;
    border-right: 1px solid #2f3643;
`;
const PanelButtons = styled.div`
    display: grid;
    grid-template-columns: 31px 25px 38px 36px 24px 26px;
`;
const RibbonButton = styled.button`
    display: flex;
    flex-direction: column;
    align-items: center;
    padding-top: 5px;
    line-height: 12px;
    color: #d6dade;
    white-space: nowrap;
    span { padding-top: 2px; }
`;
const PanelTitle = styled.h2`
    padding-top: 6px;
    line-height: 12px;
    text-align: center;
    padding-right: ${p => p.$shift ? 76 : 0}px;
    color: #d5d9de;
`;
const FileTabs = styled.div`
    grid-area: 2 / 2 / 3 / 5;
    display: flex;
    align-items: flex-end;
    border-bottom: 2px solid #3b4453;
    border-right: 2px solid #3b4453;
`;
const NewTab = styled.button`
    width: 22px;
    height: 15px;
    margin-left: 2px;
    border-radius: 0 6px 0 0;
    background: #2c333f;
    font-family: ${wide};
    font-size: 12px;
    line-height: 12px;
`;
const Properties = styled.aside`
    grid-area: 1 / 1 / 4 / 2;
    display: flex;
    min-height: 0;
    background: #2c323e;
    border-bottom: 2px solid #1f242d;
`;
const PaletteBar = styled.div`
    display: flex;
    flex-direction: column;
    align-items: center;
    gap: 7px;
    width: 15px;
    padding: 5px 0 2px;
`;
const BarName = styled.span`
    margin-top: auto;
    writing-mode: vertical-rl;
    transform: rotate(180deg);
    font-family: ${wide};
    color: #aab0b8;
`;
const PropBody = styled.div`
    display: flex;
    flex-direction: column;
    flex: 1;
    min-width: 0;
    margin: 4px 1px 0 0;
    background: #3b4453;
`;
const PropTop = styled.div`
    display: flex;
    align-items: center;
    padding: 10px 0 3px 13px;
`;
const SelectWrap = styled.label`
    display: flex;
    align-items: center;
    width: 92px;
    height: 17px;
    margin-right: 2px;
    padding: 0 2px;
    background: #4c5768;
    select { flex: 1; appearance: none; outline: none; }
`;
const PickButton = styled.button`
    display: flex;
    justify-content: center;
    width: 17px;
`;
const PropScroll = styled.div`
    display: flex;
    flex: 1;
    min-height: 0;
    overflow: hidden;
    padding: 0 11px 0 3px;
`;
const Track = styled.i`
    width: 3px;
    height: 116px;
    margin-right: 7px;
    background: #2c323e;
`;
const PropTable = styled.table`
    flex: 1;
    align-self: flex-start;
    table-layout: fixed;
    width: 138px;
    border-collapse: separate;
    border-spacing: 0;
    td, th { padding: 0; text-align: left; white-space: nowrap; overflow: hidden; line-height: 14px; }
`;
const LeadCol = styled.col`
    width: 12px;
`;
const LabelCol = styled.col`
    width: 55px;
`;
const GapRow = styled.tr`
    height: 2px;
    td { line-height: 2px; font-size: 1px; }
`;
const GroupRow = styled.tr`
    th { padding: 0 4px; height: ${p => p.$sub ? 15 : 16}px; background: ${p => p.$sub ? '#465061' : '#2c323e'}; font-weight: bold; color: #eceef0; }
    div { display: flex; align-items: center; justify-content: space-between; }
`;
const PropRow = styled.tr`
    td, th { height: 15px; }
    th { padding-left: 3px; font-weight: normal; color: #c4c9cf; border: solid #2f3743; border-width: 0 0 1px 1px; }
    td:last-child { padding-left: 1px; border: solid #2f3743; border-width: 0 0 1px 1px; color: ${p => p.$dim ? '#7c8490' : p.$soft ? '#a9afb8' : '#e4e7ea'}; ${p => p.$edit && 'border-top: 1px solid #d8dade;'} }
    td:last-child div { display: flex; align-items: center; height: ${p => p.$edit ? 13 : 14}px; }
`;
const Sample = styled.i`
    width: 31px;
    height: 1px;
    margin: 0 3px 0 2px;
    background: #dfe2e6;
`;
const EditButton = styled.button`
    display: flex;
    align-items: center;
    justify-content: center;
    width: 11px;
    height: 13px;
    margin-left: auto;
    background: #f4f4f4;
`;
const ProjectTabs = styled.nav`
    grid-area: 3 / 2 / 4 / 3;
    display: flex;
    flex-direction: column;
    padding: 19px 2px 0 9px;
    background: linear-gradient(#aeb4bd, #aeb4bd) 2px 32px / 1px 18px no-repeat, linear-gradient(#aeb4bd, #aeb4bd) 1px 71px / 3px 1px no-repeat, linear-gradient(#aeb4bd, #aeb4bd) 3px 71px / 1px 225px no-repeat, #3b4453;
`;
const ProjectTab = styled.button`
    display: flex;
    align-items: center;
    justify-content: center;
    flex: 0 1 ${p => p.$size}px;
    writing-mode: vertical-rl;
    transform: rotate(180deg);
    font-family: ${wide};
    white-space: nowrap;
    line-height: 12px;
    color: ${p => p.$active ? '#e2e5e8' : '#a2a8b1'};
    background: ${p => p.$active ? '#3b4453' : '#2f3642'};
    border: 1px solid #2b313c;
`;
const Details = styled.section`
    grid-area: 4 / 1 / 5 / 3;
    display: flex;
    padding: 1px 21px 14px 7px;
    background: #3b4453;
`;
const DetailsBox = styled.div`
    display: flex;
    flex-direction: column;
    flex: 1;
    min-width: 0;
    border: 1px solid #aeb4bd;
`;
const DetailsList = styled.ul`
    display: flex;
    flex-direction: column;
    justify-content: space-between;
    height: 67%;
    padding: 3px 0 0 4px;
    line-height: 12px;
    overflow: hidden;
    white-space: pre;
`;
const ScrollRow = styled.div`
    display: flex;
    align-items: center;
    gap: 3px;
    height: 13px;
    margin-top: auto;
    padding: 0 2px;
    background: #f0f0f0;
`;
const ScrollTrack = styled.div`
    flex: 1;
`;
const ScrollThumb = styled.div`
    width: 54%;
    height: 11px;
    background: #cbcbcb;
`;
const Center = styled.section`
    grid-area: 3 / 3 / 5 / 4;
    display: flex;
    flex-direction: column;
    min-height: 0;
`;
const Viewport = styled.div`
    position: relative;
    flex: 1;
    min-height: 0;
    background: #212830;
`;
const Scene = styled.svg`
    width: 100%;
    height: 100%;
`;
const ViewControls = styled.div`
    position: absolute;
    top: 6px;
    left: 2px;
    display: flex;
`;
const ViewButtons = styled.div`
    position: absolute;
    top: 8px;
    right: 7px;
    display: flex;
    gap: 5px;
`;
const CubeBox = styled.div`
    position: absolute;
    top: 46px;
    right: 10px;
    display: flex;
    flex-direction: column;
    align-items: center;
    gap: 8px;
`;
const Ucs = styled.button`
    width: 45px;
    height: 13px;
    padding-left: 3px;
    border-radius: 2px;
    border: 1px solid #b4b8bc;
    background: #979b9f;
    color: #50555b;
    line-height: 10px;
    text-align: left;
`;
const NavBar = styled.div`
    position: absolute;
    top: 172px;
    right: 3px;
    border-radius: 3px;
    background: #5f6367;
`;
const CommandLine = styled.div`
    display: flex;
    flex: none;
    height: 54px;
    padding-top: 3px;
    background: #2c323e;
`;
const CommandBar = styled.div`
    display: flex;
    flex-direction: column;
    align-items: center;
    gap: 6px;
    width: 16px;
    padding-top: 3px;
`;
const Grip = styled.i`
    width: 11px;
    height: 4px;
    border: solid #a7adb5;
    border-width: 1px 0;
`;
const CommandMain = styled.div`
    display: flex;
    flex-direction: column;
    flex: 1;
    font-family: "DejaVu Sans Mono", monospace;
    font-size: 8px;
`;
const History = styled.div`
    flex: 1;
    padding: 10px 2px 0;
    line-height: 12px;
    color: #151719;
    background: #c8c8c8;
    border-bottom: 1px solid #70757c;
`;
const CommandEntry = styled.label`
    display: flex;
    align-items: center;
    gap: 4px;
    height: 16px;
    padding-left: 3px;
    background: #fff;
`;
const CommandInput = styled.input`
    flex: 1;
    font-style: italic;
    color: #333;
    outline: none;
    &::placeholder { color: #666; opacity: 1; }
`;
const ToolPalettes = styled.aside`
    grid-area: 3 / 4 / 5 / 5;
    display: flex;
    flex-direction: column;
    min-height: 0;
    padding-left: 3px;
    background: #3b4453;
`;
const PaletteTitle = styled.header`
    display: flex;
    align-items: center;
    gap: 4px;
    height: 16px;
    margin: 2px 3px 0 13px;
    padding-left: 3px;
    background: #343b48;
    color: #dde0e4;
    white-space: nowrap;
`;
const Dots = styled.i`
    height: 8px;
    border-left: 2px dotted #8a919c;
`;
const PaletteMain = styled.div`
    display: flex;
    flex: 1;
    min-height: 0;
`;
const PaletteTabs = styled.nav`
    display: flex;
    flex-direction: column;
    width: 13px;
    padding-top: 1px;
`;
const PaletteTab = styled.button`
    display: flex;
    align-items: center;
    justify-content: center;
    flex: 0 1 95px;
    writing-mode: vertical-rl;
    transform: rotate(180deg);
    font-family: ${wide};
    white-space: nowrap;
    line-height: 12px;
    color: ${p => p.$active ? '#f0f2f4' : '#c2c7cd'};
    background: ${p => p.$active ? '#3b4453' : '#2e3541'};
    border-top: 1px solid #262c36;
`;
const PaletteList = styled.div`
    flex: 1;
    min-width: 0;
    margin: 0 3px 0 2px;
    overflow: hidden;
`;
const CustomPart = styled.button`
    display: flex;
    align-items: center;
    gap: 6px;
    width: 100%;
    height: 45px;
    padding-bottom: 5px;
    border-bottom: 1px solid #2c333f;
`;
const SpecName = styled.p`
    height: 44px;
    line-height: 42px;
    color: #a9afb8;
    border-bottom: 1px solid #2c333f;
`;
const Section = styled.section`
    padding-bottom: 6px;
    border-bottom: 1px solid #2c333f;
    h3 { padding: 13px 0 8px; line-height: 16px; color: #adb3bb; }
`;
const Part = styled.button`
    display: flex;
    align-items: center;
    gap: 3px;
    width: 100%;
    height: 33px;
    padding-left: 3px;
    line-height: 13px;
    text-align: left;
    color: #e0e3e7;
`;
const PaletteScroll = styled.i`
    width: 3px;
    height: 135px;
    margin: 4px 5px 0 0;
    border-radius: 2px;
    background: #2c323e;
`;
const StatusBar = styled.footer`
    display: flex;
    justify-content: flex-end;
    gap: 2px;
    flex: none;
    height: 22px;
    padding: 2px 4px 1px 0;
`;
const StatusGroup = styled.div`
    display: flex;
    background: #363e4c;
`;
const StatusButton = styled.button`
    display: flex;
    align-items: center;
    justify-content: center;
    width: ${p => p.$slim ? 13 : 16}px;
    background: ${p => p.$on ? '#5b93cf' : 'transparent'};
`;
const StatusCaret = styled.button`
    display: flex;
    align-items: center;
    justify-content: center;
    width: 10px;
`;
const ModelButton = styled.button`
    width: 32px;
    color: #eceef0;
`;
const ScaleButton = styled.button`
    display: flex;
    align-items: center;
    justify-content: center;
    gap: 3px;
    width: 22px;
`;
